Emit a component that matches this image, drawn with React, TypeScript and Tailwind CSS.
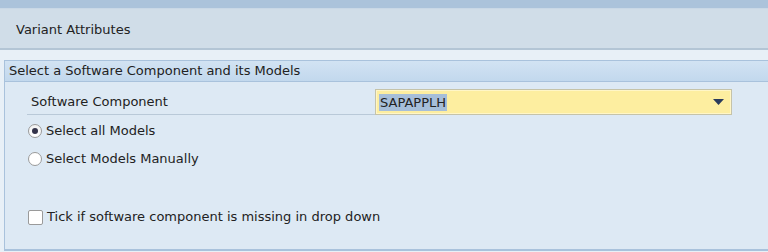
import React from "react";

const App: React.FC = () => {
  return (
    <div
      className="w-[768px] h-[252px] overflow-hidden bg-[#e8f0f7] text-[13px] text-[#222]"
      style={{ fontFamily: '"DejaVu Sans", Verdana, sans-serif' }}
    >
      {/* top strip */}
      <div className="h-[9px] bg-[#abc3db] border-b border-[#c9d8e6]" />

      {/* title bar */}
      <div className="h-[41px] flex items-center px-4 pt-[2px] bg-[#d0dde8] border-b-2 border-[#b3c5d5]">
        <span>Variant Attributes</span>
      </div>

      {/* group box */}
      <div className="mt-[10px] ml-1 border-l border-b-2 border-t border-[#a9c2dc] bg-[#dde9f4] h-[191px]">
        <div className="h-[21px] flex items-center pl-[4px] bg-gradient-to-b from-[#d2e3f3] to-[#c2d8ed] border-b border-[#a9c2dc]">
          Select a Software Component and its Models
        </div>

        <div className="pl-[22px] pt-[7px]">
          {/* software component row */}
          <div className="flex items-center h-[26px]">
            <div className="w-[348px] h-[26px] flex items-center pl-[4px] border-b border-[#b9c9d8]">
              Software Component
            </div>
            <div className="w-[357px] h-[26px] flex items-center justify-between bg-[#fdeea0] border border-[#c5c3a9] pl-[3px] pr-[7px] shadow-[inset_0_0_0_1px_#fff6c7]">
              <span className="bg-[#a6bed9] leading-[17px] px-[1px]">SAPAPPLH</span>
              <svg width="11" height="7" viewBox="0 0 11 7">
                <path d="M0 0 H11 L5.5 6 Z" fill="#2a3b5c" />
              </svg>
            </div>
          </div>

          {/* radios */}
          <div className="flex items-center gap-[4px] h-[28px] mt-[2px] pl-[1px]">
            <span className="w-[14px] h-[14px] rounded-full border border-[#9a9a9a] bg-gradient-to-b from-[#f2f2f2] to-[#ffffff] flex items-center justify-center">
              <span className="w-[6px] h-[6px] rounded-full bg-[#33334a]" />
            </span>
            <span>Select all Models</span>
          </div>
          <div className="flex items-center gap-[4px] h-[28px] pl-[1px]">
            <span className="w-[14px] h-[14px] rounded-full border border-[#9a9a9a] bg-white" />
            <span>Select Models Manually</span>
          </div>

          {/* checkbox */}
          <div className="flex items-center gap-[4px] h-[28px] mt-[30px] pl-[1px]">
            <span className="w-[15px] h-[15px] rounded-[2px] border border-[#9a9a9a] bg-white" />
            <span>Tick if software component is missing in drop down</span>
          </div>
        </div>
      </div>
    </div>
  );
};

export default App;
